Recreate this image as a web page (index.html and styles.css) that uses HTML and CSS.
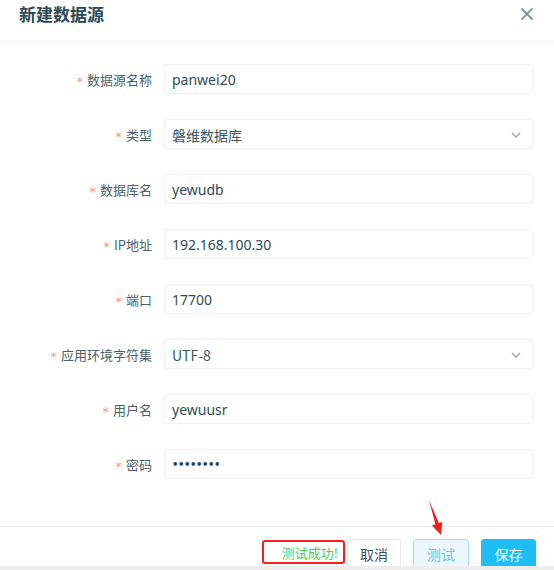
FILE: index.html
```html
<!DOCTYPE html>
<html lang="zh-CN">
<head>
    <meta charset="UTF-8">
    <meta name="viewport" content="width=device-width, initial-scale=1.0">
    <title>新建数据源</title>
    <link rel="stylesheet" href="styles.css">
</head>
<body>

    <!-- New datasource dialog -->
    <div class="dialog">
        <div class="dialog-header">
            <h2 class="dialog-title">新建数据源</h2>
            <span class="dialog-close">
                <svg width="14" height="14" viewBox="0 0 14 14"><path d="M1.5 1.5 L12.5 12.5 M12.5 1.5 L1.5 12.5" stroke="#7f939b" stroke-width="1.8" fill="none"/></svg>
            </span>
        </div>

        <form class="dialog-body">
            <div class="form-item">
                <label class="form-label">数据源名称</label>
                <input class="form-input" type="text" value="panwei20">
            </div>
            <div class="form-item">
                <label class="form-label">类型</label>
                <div class="form-select">
                    <span>磐维数据库</span>
                    <svg class="select-arrow" width="10" height="6" viewBox="0 0 10 6"><path d="M1 1 L5 5 L9 1" stroke="#9aa4ab" stroke-width="1.4" fill="none"/></svg>
                </div>
            </div>
            <div class="form-item">
                <label class="form-label">数据库名</label>
                <input class="form-input" type="text" value="yewudb">
            </div>
            <div class="form-item">
                <label class="form-label">IP地址</label>
                <input class="form-input" type="text" value="192.168.100.30">
            </div>
            <div class="form-item">
                <label class="form-label">端口</label>
                <input class="form-input" type="text" value="17700">
            </div>
            <div class="form-item">
                <label class="form-label">应用环境字符集</label>
                <div class="form-select">
                    <span>UTF-8</span>
                    <svg class="select-arrow" width="10" height="6" viewBox="0 0 10 6"><path d="M1 1 L5 5 L9 1" stroke="#9aa4ab" stroke-width="1.4" fill="none"/></svg>
                </div>
            </div>
            <div class="form-item">
                <label class="form-label">用户名</label>
                <input class="form-input" type="text" value="yewuusr">
            </div>
            <div class="form-item">
                <label class="form-label">密码</label>
                <input class="form-input password" type="text" value="••••••••">
            </div>
        </form>

        <div class="dialog-footer">
            <span class="test-result">测试成功!</span>
            <button class="btn btn-cancel" type="button">取消</button>
            <button class="btn btn-test" type="button">测试</button>
            <button class="btn btn-save" type="button">保存</button>
        </div>

        <!-- annotation arrow -->
        <svg class="arrow-mark" width="30" height="42" viewBox="0 0 30 42">
            <path d="M9 5 L18.8 28.1 L22.3 26.9 L21 40 L11.9 30.5 L15.4 29.3 Z" fill="#f51c1c"/>
        </svg>
    </div>

</body>
</html>
```

FILE: styles.css
```css
html {
    background-color: #eeeeee;
}
body {
    margin: 0;
    font-family: "Noto Sans CJK SC", "Noto Sans", sans-serif;
    color: #2f4c56;
}
.dialog {
    position: relative;
    width: 554px;
    height: 566px;
    background-color: #fff;
    overflow: hidden;
}
.dialog-header {
    display: flex;
    align-items: center;
    justify-content: space-between;
    height: 42px;
    padding: 0 20px 0 19px;
    border-bottom: 1px solid #eceff0;
    box-sizing: border-box;
}
.dialog-title {
    margin: 0 0 14px 0;
    font-size: 17px;
    font-weight: bold;
    color: #2c4a55;
}
.dialog-close {
    display: flex;
    margin-bottom: 13px;
}
.dialog-body {
    padding: 22px 21px 23px 0;
}
.form-item {
    display: flex;
    align-items: center;
    height: 30px;
    margin-bottom: 25px;
}
.form-item:last-child {
    margin-bottom: 24px;
}
.form-label {
    display: flex;
    align-items: center;
    justify-content: flex-end;
    width: 164px;
    padding-right: 12px;
    box-sizing: border-box;
    font-size: 13px;
    color: #4d5f67;
}
.form-label::before {
    content: "*";
    font-family: "DejaVu Sans", sans-serif;
    font-size: 13px;
    color: #f99a8a;
    margin-right: 4px;
    position: relative;
    top: 2px;
}
.form-input, .form-select {
    flex: 1;
    height: 30px;
    box-sizing: border-box;
    border: 1px solid #eef0f1;
    border-radius: 3px;
    padding: 1px 7px 0;
    font-family: "Noto Sans", "Noto Sans CJK SC", sans-serif;
    font-size: 14px;
    color: #2f4c56;
    outline: none;
    background-color: #fff;
}
.form-select {
    display: flex;
    align-items: center;
    justify-content: space-between;
    padding-right: 11px;
    font-family: "Noto Sans CJK SC", sans-serif;
    color: #40555e;
}
.password {
    font-family: "DejaVu Sans", sans-serif;
    font-size: 10px;
    letter-spacing: -0.4px;
    font-weight: bold;
    color: #23434e;
}
.dialog-footer {
    display: flex;
    align-items: flex-start;
    justify-content: flex-end;
    height: 40px;
    padding: 12px 18px 0 0;
    border-top: 1px solid #eaeced;
}
.test-result {
    display: flex;
    align-items: center;
    justify-content: flex-end;
    width: 83px;
    height: 24px;
    margin-top: 1px;
    padding-right: 5px;
    box-sizing: border-box;
    border: 2px solid #f41f1f;
    border-radius: 3px;
    font-size: 13px;
    color: #58c94b;
    margin-right: 2px;
}
.btn {
    height: 30px;
    width: 55px;
    padding: 0;
    border-radius: 3px;
    font-family: "Noto Sans CJK SC", sans-serif;
    font-size: 14px;
    cursor: pointer;
    margin-left: 12px;
}
.btn-cancel {
    width: 54px;
    margin-left: 0;
    background-color: #fff;
    border: 1px solid #e9ebec;
    color: #3e535c;
}
.btn-test {
    width: 56px;
    background-color: #ebf7fb;
    border: 1px solid #a3dcf3;
    color: #6fc2e6;
}
.btn-save {
    background-color: #1fbdf6;
    border: 1px solid #1fbdf6;
    color: #fff;
}
.arrow-mark {
    position: absolute;
    left: 420px;
    top: 495px;
}
```
